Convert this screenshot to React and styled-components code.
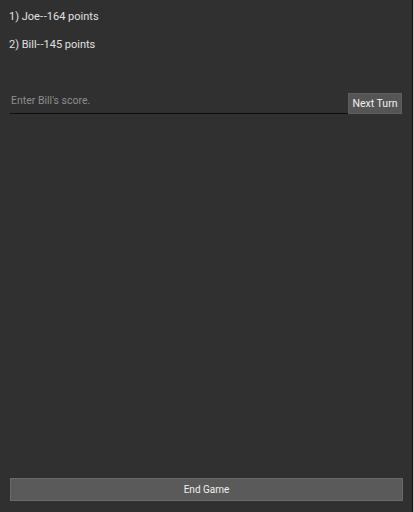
import React from 'react';
import styled, { createGlobalStyle } from 'styled-components';

const GlobalStyle = createGlobalStyle`
  html, body {
    margin: 0;
    padding: 0;
    background: #303030;
  }
  body {
    font-family: Roboto, "Noto Sans", sans-serif;
  }
`;

const players = [
  { name: 'Joe', points: 164 },
  { name: 'Bill', points: 145 },
];

export default function App() {
  return (
    <>
      <GlobalStyle />
      <Screen>
        <Scores>
          {players.map((p, i) => (
            <ScoreLine key={p.name}>
              {i + 1}) {p.name}
              <Dash>--</Dash>
              {p.points} points
            </ScoreLine>
          ))}
        </Scores>
        <EntryRow>
          <ScoreInput placeholder="Enter Bill's score." />
          <SmallButton>Next Turn</SmallButton>
        </EntryRow>
        <Spacer />
        <Footer>
          <WideButton>End Game</WideButton>
        </Footer>
      </Screen>
    </>
  );
}

const Screen = styled.div`
  width: 413px;
  height: 512px;
  box-sizing: border-box;
  display: flex;
  flex-direction: column;
  background: #303030;
  border-right: 1px solid #141414;
  box-shadow: 1px 0 0 #c8c8c8;
`;

const Scores = styled.div`
  display: flex;
  flex-direction: column;
  gap: 14px;
  padding: 10px 0 0 9px;
`;

const ScoreLine = styled.div`
  color: #e0e0e0;
  font-size: 11px;
  line-height: 14px;
`;

const Dash = styled.span`
  letter-spacing: 0.8px;
  margin-right: -0.8px;
`;

const EntryRow = styled.div`
  display: flex;
  align-items: flex-end;
  margin: 39px 10px 0 10px;
`;

const ScoreInput = styled.input`
  flex: 1;
  min-width: 0;
  height: 23px;
  box-sizing: border-box;
  background: transparent;
  border: none;
  border-bottom: 1px solid #0c0c0c;
  padding: 0 0 4px 1px;
  color: #e0e0e0;
  font-family: Roboto, "Noto Sans", sans-serif;
  font-size: 10.5px;
  outline: none;
  &::placeholder {
    color: #8e8e8e;
  }
`;

const SmallButton = styled.button`
  width: 54px;
  height: 21px;
  margin-bottom: 0;
  background: #555555;
  border: 1px solid #5e5e5e;
  color: #f0f0f0;
  font-family: Roboto, "Noto Sans", sans-serif;
  font-size: 10.5px;
  padding: 0;
  cursor: pointer;
`;

const Spacer = styled.div`
  flex: 1;
`;

const Footer = styled.div`
  padding: 0 9px 11px 10px;
`;

const WideButton = styled.button`
  width: 100%;
  height: 23px;
  background: #5a5a5a;
  border: 1px solid #6a6a6a;
  color: #f0f0f0;
  font-family: Roboto, "Noto Sans", sans-serif;
  font-size: 10px;
  padding: 0;
  cursor: pointer;
`;
